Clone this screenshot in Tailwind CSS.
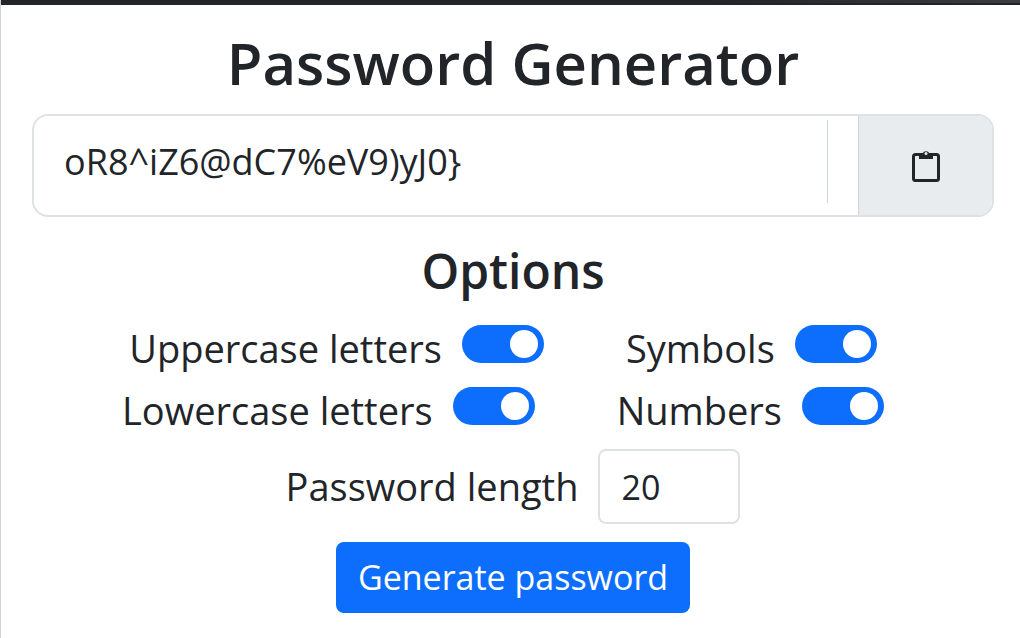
<!DOCTYPE html>
<html lang="en">
<head>
  <meta charset="UTF-8" />
  <meta name="viewport" content="width=device-width, initial-scale=1.0" />
  <title>Password Generator</title>
  <script src="https://cdn.jsdelivr.net/npm/@tailwindcss/browser@4"></script>
</head>
<body class="min-h-screen bg-white font-['Open_Sans','Noto_Sans',sans-serif] text-[#212529] border-l border-[#d0d0d2]">

  <!-- Top edge -->
  <div class="h-[5px] -ml-px bg-linear-to-r from-[#232427] from-70% to-[#3c3d40] border-b-2 border-[#232427]"></div>

  <main class="flex flex-col items-center pl-[31px] pr-[26px] pt-6">
    <h1 class="text-[58px] leading-[68px] font-semibold">Password Generator</h1>

    <!-- Generated password -->
    <div class="flex w-full h-[103px] mt-[17px] border-2 border-[#dee2e6] rounded-2xl overflow-hidden">
      <div class="flex flex-1 py-1 pr-[30px]">
        <input type="text" id="password" aria-label="Generated password" value="oR8^iZ6@dC7%eV9)yJ0}" readonly class="flex-1 min-w-0 pl-[30px] text-[36px] border-r border-[#ced4da] mb-2 outline-none" />
      </div>
      <button type="button" id="copy" aria-label="Copy password" class="flex items-center justify-center w-[134px] bg-[#e9ecef] border-l border-[#ced4da]">
        <svg class="w-[30px] h-[36px]" viewBox="0 0 30 36" fill="none" stroke="#212529" stroke-width="3">
          <rect x="2.5" y="6.5" width="25" height="26" rx="2" />
          <path d="M8 5.500h3.500a3.800 3.800 0 0 1 7 0H22v5.500H8z" fill="#212529" stroke="none" />
          <circle cx="15" cy="5.500" r="1.500" fill="#e9ecef" stroke="none" />
        </svg>
      </button>
    </div>

    <h2 class="mt-6 text-[48px] leading-[60px] font-semibold">Options</h2>

    <!-- Switches -->
    <div class="flex flex-col items-center gap-2 mt-5 mr-5 text-[38px] leading-[54px]">
      <div class="flex gap-[82px]">
        <div class="flex gap-5">
          <label for="uppercase">Uppercase letters</label>
          <input type="checkbox" role="switch" id="uppercase" checked class="appearance-none flex items-center w-[82px] h-[38px] mt-1 px-[6px] rounded-full bg-[#ced4da] checked:bg-[#0d6efd] checked:justify-end before:size-7 before:rounded-full before:bg-white" />
        </div>
        <div class="flex gap-5">
          <label for="symbols">Symbols</label>
          <input type="checkbox" role="switch" id="symbols" checked class="appearance-none flex items-center w-[82px] h-[38px] mt-1 px-[6px] rounded-full bg-[#ced4da] checked:bg-[#0d6efd] checked:justify-end before:size-7 before:rounded-full before:bg-white" />
        </div>
      </div>
      <div class="flex gap-[82px]">
        <div class="flex gap-5">
          <label for="lowercase">Lowercase letters</label>
          <input type="checkbox" role="switch" id="lowercase" checked class="appearance-none flex items-center w-[82px] h-[38px] mt-1 px-[6px] rounded-full bg-[#ced4da] checked:bg-[#0d6efd] checked:justify-end before:size-7 before:rounded-full before:bg-white" />
        </div>
        <div class="flex gap-5">
          <label for="numbers">Numbers</label>
          <input type="checkbox" role="switch" id="numbers" checked class="appearance-none flex items-center w-[82px] h-[38px] mt-1 px-[6px] rounded-full bg-[#ced4da] checked:bg-[#0d6efd] checked:justify-end before:size-7 before:rounded-full before:bg-white" />
        </div>
      </div>
    </div>

    <!-- Length -->
    <div class="flex items-center gap-5 mt-3">
      <label for="length" class="text-[38px]">Password length</label>
      <input type="number" id="length" value="20" min="4" max="64" class="w-[142px] h-[75px] pl-[21px] text-[34px] border-2 border-[#dee2e6] rounded-lg outline-none" />
    </div>

    <button type="button" id="generate" class="h-[71px] mt-[18px] px-[22px] text-[34px] text-white bg-[#0d6efd] rounded-lg">Generate password</button>
  </main>

  <script>
    const sets = {
      uppercase: "ABCDEFGHIJKLMNOPQRSTUVWXYZ",
      lowercase: "abcdefghijklmnopqrstuvwxyz",
      symbols: "!@#$%^&*(){}[]",
      numbers: "0123456789"
    };
    const password = document.getElementById("password");

    document.getElementById("generate").addEventListener("click", () => {
      const active = Object.keys(sets).filter((id) => document.getElementById(id).checked);
      const length = Number(document.getElementById("length").value);
      let result = "";
      for (let i = 0; active.length && i < length; i++) {
        const chars = sets[active[i % active.length]];
        result += chars[Math.floor(Math.random() * chars.length)];
      }
      password.value = result;
    });

    document.getElementById("copy").addEventListener("click", () => {
      navigator.clipboard.writeText(password.value);
    });
  </script>

</body>
</html>
